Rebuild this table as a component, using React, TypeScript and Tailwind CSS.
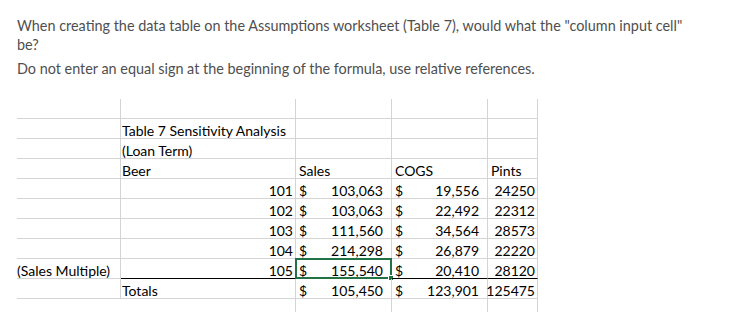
import React from "react";

type Money = [string, string];
type Row = {
  a?: string;
  b?: string;
  bRight?: boolean;
  c?: string | Money;
  d?: string | Money;
  e?: string;
  eRight?: boolean;
  thick?: boolean;
  selected?: boolean;
};

const rows: Row[] = [
  {},
  { b: "Table 7 Sensitivity Analysis" },
  { b: "(Loan Term)" },
  { b: "Beer", c: "Sales", d: "COGS", e: "Pints" },
  { b: "101", bRight: true, c: ["$", "103,063"], d: ["$", "19,556"], e: "24250", eRight: true },
  { b: "102", bRight: true, c: ["$", "103,063"], d: ["$", "22,492"], e: "22312", eRight: true },
  { b: "103", bRight: true, c: ["$", "111,560"], d: ["$", "34,564"], e: "28573", eRight: true },
  { b: "104", bRight: true, c: ["$", "214,298"], d: ["$", "26,879"], e: "22220", eRight: true },
  {
    a: "(Sales Multiple)",
    b: "105",
    bRight: true,
    c: ["$", "155,540"],
    d: ["$", "20,410"],
    e: "28120",
    eRight: true,
    thick: true,
    selected: true,
  },
  { b: "Totals", c: ["$", "105,450"], d: ["$", "123,901"], e: "125475", eRight: true },
];

const cell = "relative h-[20px] flex items-end leading-[15px] whitespace-nowrap border-r border-b";

function MoneyCell({ v }: { v?: string | Money }) {
  if (!v) return null;
  if (typeof v === "string") return <span className="pl-[3px]">{v}</span>;
  return (
    <div className="flex w-full justify-between pl-[3px] pr-[8px]">
      <span>{v[0]}</span>
      <span>{v[1]}</span>
    </div>
  );
}

export default function App() {
  return (
    <div className="w-[752px] h-[312px] overflow-hidden bg-white">
      <div className="pl-[17px] pt-[16px] text-[14.4px] leading-[19px] text-[#4f4f4f] font-['Lato',sans-serif]">
        <p className="whitespace-nowrap">
          When creating the data table on the Assumptions worksheet (Table 7), would what the "column input cell"
          <br />
          be?
        </p>
        <p className="mt-[5px]">
          Do not enter an equal sign at the beginning of the formula, use relative references.
        </p>
      </div>

      <div className="ml-[17px] mt-[21px] grid grid-cols-[104px_175px_96px_96px_50px] text-[14px] text-black font-['Lato',sans-serif]">
        {rows.map((r, i) => (
          <React.Fragment key={i}>
            <div className={`${cell} border-[#d4d4d4]`}>{r.a}</div>
            <div
              className={`${cell} border-r-[#d4d4d4] ${r.thick ? "border-b-black" : "border-b-[#d4d4d4]"} ${
                r.bRight ? "justify-end pr-[2px]" : "pl-[1px]"
              }`}
            >
              {r.b}
            </div>
            <div className={`${cell} border-r-[#d4d4d4] ${r.thick ? "border-b-black" : "border-b-[#d4d4d4]"}`}>
              <MoneyCell v={r.c} />
              {r.selected && (
                <div className="absolute -left-px -top-px -right-px -bottom-px border-2 border-[#217346]">
                  <div className="absolute -right-[4px] -bottom-[4px] w-[6px] h-[6px] bg-[#217346] border border-white" />
                </div>
              )}
            </div>
            <div className={`${cell} border-r-[#d4d4d4] ${r.thick ? "border-b-black" : "border-b-[#d4d4d4]"}`}>
              <MoneyCell v={r.d} />
            </div>
            <div
              className={`${cell} border-r-[#d4d4d4] ${r.thick ? "border-b-black" : "border-b-[#d4d4d4]"} ${
                r.eRight ? "justify-end pr-[2px]" : "pl-[3px]"
              }`}
            >
              {r.e}
            </div>
          </React.Fragment>
        ))}
        <div className="h-[14px]" />
        <div className="h-[14px] border-r border-[#d4d4d4]" />
        <div className="h-[14px] border-r border-[#d4d4d4]" />
        <div className="h-[14px] border-r border-[#d4d4d4]" />
        <div className="h-[14px] border-r border-[#d4d4d4]" />
      </div>
    </div>
  );
}
